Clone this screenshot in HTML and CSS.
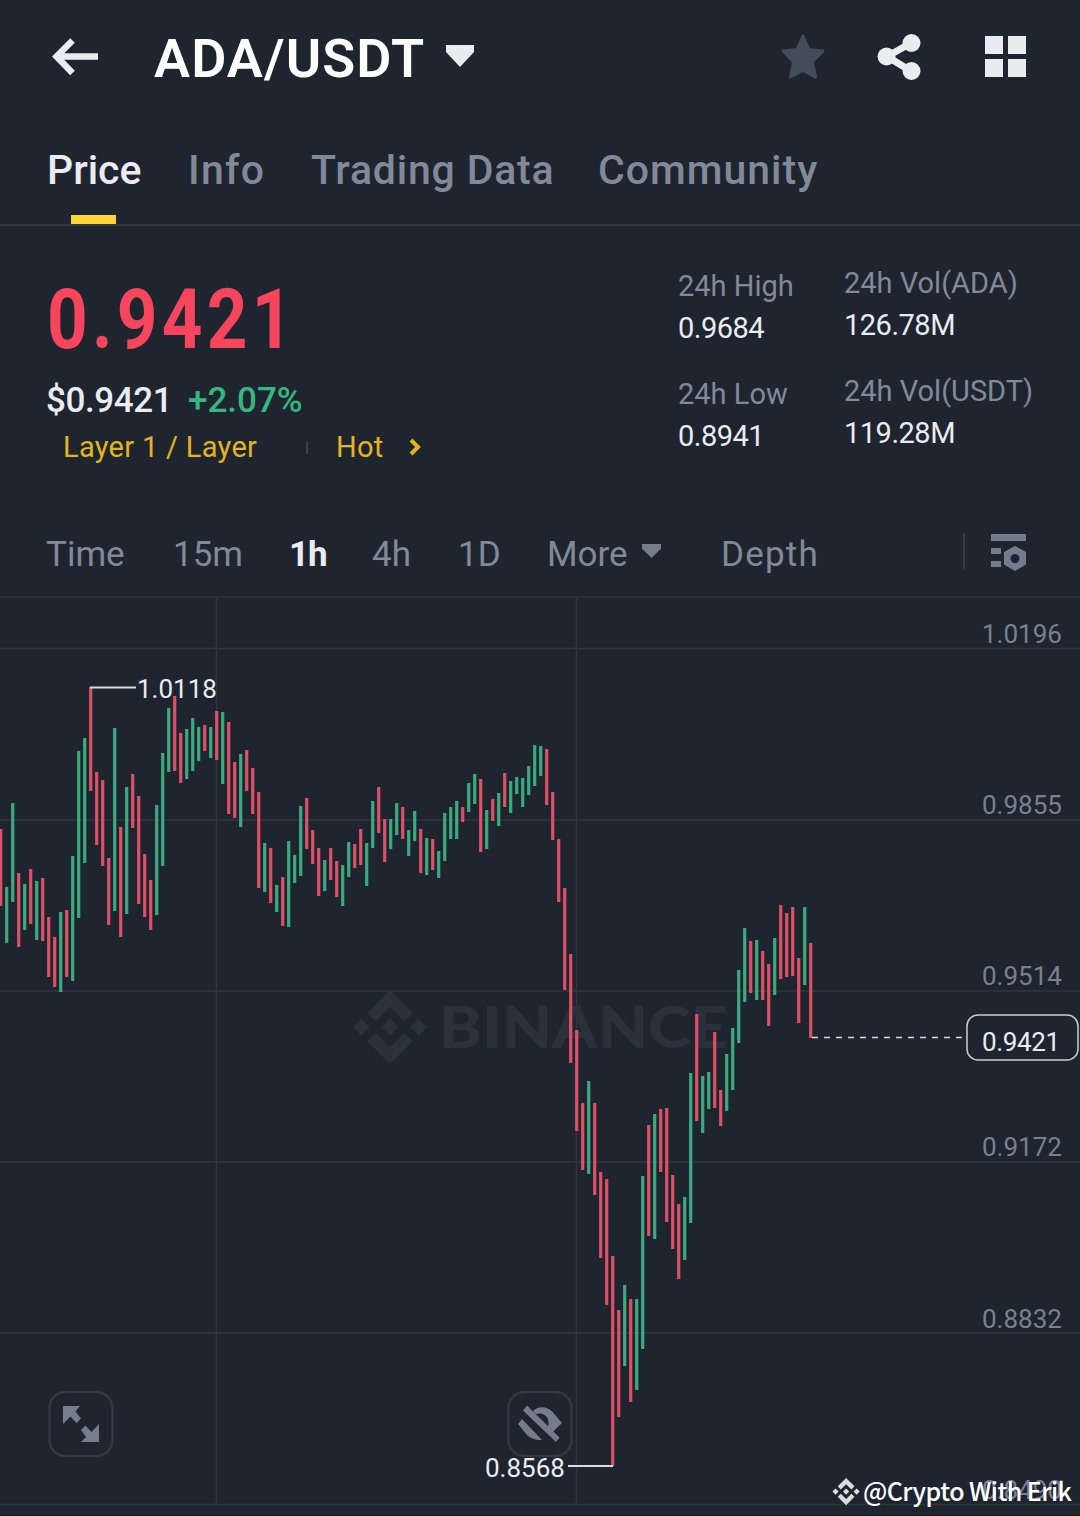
FILE: index.html
```html
<!DOCTYPE html>
<html lang="en">
    <head>
        <meta charset="UTF-8">
        <meta name="viewport" content="width=device-width, initial-scale=1.0">
        <title>ADA/USDT</title>
        <link rel="stylesheet" href="styles.css">
    </head>
    <body>
        <header class="header">
            <svg class="back" width="46" height="38" viewBox="0 0 46 38"><path d="M46 18.500H6M20.500 2.500L4.500 18.500L20.500 35"/></svg>
            <h1>ADA/USDT</h1>
            <svg class="caret" width="28" height="23" viewBox="0 0 28 23"><path d="M0 0h28v7L14 22 0 7z"/></svg>
            <div class="actions">
                <svg width="46" height="48" viewBox="0 0 46 48"><path class="star" d="M23 3l6 13.500 14 1.500-10.500 10.500 3 15.500L23 37.500 10.500 44l3-15.500L3 18l14-1.500z"/></svg>
                <svg width="44" height="46" viewBox="0 0 44 46"><path class="share-line" d="M34 9L10 22.500 34 37"/><g class="light"><circle cx="34.500" cy="9" r="9"/><circle cx="9.500" cy="22.500" r="9"/><circle cx="34.500" cy="37" r="9"/></g></svg>
                <svg width="41" height="41" viewBox="0 0 41 41"><path class="light" d="M0 0h18v18H0zM23 0h18v18H23zM0 23h18v18H0zM23 23h18v18H23z"/></svg>
            </div>
        </header>

        <nav class="tabs">
            <a class="active">Price</a>
            <a class="info">Info</a>
            <a class="trading">Trading Data</a>
            <a class="community">Community</a>
        </nav>

        <section class="summary">
            <div class="quote">
                <div class="price">0.9421</div>
                <div class="change"><span class="usd">$0.9421</span><span class="up">+2.07%</span></div>
                <div class="tags">
                    <span class="layer">Layer 1 / Layer</span>
                    <i class="tag-sep"></i>
                    <span class="hot">Hot</span>
                    <svg width="12" height="18" viewBox="0 0 12 18"><path d="M2 2l7 7-7 7"/></svg>
                </div>
            </div>
            <div class="stats">
                <div class="stat"><label class="high">24h High</label><b>0.9684</b></div>
                <div class="stat"><label class="low">24h Low</label><b>0.8941</b></div>
            </div>
            <div class="stats volume">
                <div class="stat"><label class="vol-ada">24h Vol(ADA)</label><b>126.78M</b></div>
                <div class="stat"><label class="vol-usdt">24h Vol(USDT)</label><b>119.28M</b></div>
            </div>
        </section>

        <nav class="intervals">
            <span class="time">Time</span>
            <span class="m15">15m</span>
            <span class="h1 active">1h</span>
            <span class="h4">4h</span>
            <span class="d1">1D</span>
            <span class="more">More</span>
            <svg class="more-caret" width="19" height="14" viewBox="0 0 19 14"><path d="M0 0h19v4.500L9.500 14 0 4.500z"/></svg>
            <span class="depth">Depth</span>
            <i class="divider"></i>
            <svg class="settings" width="36" height="37" viewBox="0 0 36 37">
                <path fill-rule="evenodd" d="M0 0h35v7H0zM0 14h10v6H0zM0 27h10v6H0zM24 12l11 6v12.500L24 37l-11-6.500V18zM24 20a4.500 4.500 0 1 0 .01 0z"/>
            </svg>
        </nav>

        <svg class="chart" width="1080" height="918" viewBox="0 598 1080 918">
            <defs>
                <g id="logo">
                    <path d="M38.7 53.200L63.300 28.600 87.900 53.200 102.200 38.900 63.300 0 24.400 38.900zM38.700 73.400L63.300 98 87.900 73.400 102.200 87.700 63.300 126.600 24.400 87.700zM0 63.300L14.300 49 28.600 63.300 14.300 77.600zM98 63.300L112.300 49 126.600 63.300 112.300 77.600zM48.800 63.300L63.300 48.800 77.800 63.300 63.300 77.800z"/>
                </g>
            </defs>
            <path class="grid" d="M0 648.500H1080M0 820H1080M0 991H1080M0 1162H1080M0 1333H1080M0 1504.500H1080M216.500 598V1504M576.500 598V1504"/>
            <path class="bottom-edge" d="M0 1515.500H1080"/>

            <g class="watermark">
                <use href="#logo" transform="translate(353 990) scale(.585)"/>
                <text x="439" y="1048" textLength="289" lengthAdjust="spacingAndGlyphs">BINANCE</text>
            </g>

            <g class="scale">
                <text x="982" y="643">1.0196</text>
                <text x="982" y="814">0.9855</text>
                <text x="982" y="985">0.9514</text>
                <text x="982" y="1156">0.9172</text>
                <text x="982" y="1328">0.8832</text>
                <text x="982" y="1499">0.8490</text>
            </g>

            <g class="chart-button">
                <rect x="49.500" y="1392" width="63" height="64" rx="16"/>
                <path d="M63 1406H80L75.500 1411.500 81 1418.500 76.500 1423 70.500 1416.500 63 1424zM99 1442H81L86 1437 81 1430 85.500 1425.500 91.500 1432 99 1424z"/>
                <rect x="508.500" y="1392" width="63" height="64" rx="16"/>
                <path d="M522 1419L518 1424 527 1435Q533 1440.500 542 1440zM527 1405.500L559.500 1437.500 556 1442 523 1410.500zM533 1411C540 1405 548 1407 553 1412.500L562 1423 550.500 1434 546.500 1430C552 1421 546 1411 536 1414z"/>
            </g>

            <g id="bars"></g>

            <path class="marker" d="M90 687.500H136M568 1466H613"/>
            <path class="last-line" d="M812 1037.500H964"/>
            <rect class="last-box" x="967" y="1015" width="111" height="45" rx="11"/>
            <g class="value">
                <text x="137" y="698">1.0118</text>
                <text x="485" y="1477">0.8568</text>
                <text x="982" y="1051" textLength="78">0.9421</text>
            </g>

            <g class="author">
                <use href="#logo" transform="translate(832.500 1478) scale(.215)"/>
                <text x="863" y="1501" textLength="209">@Crypto With Erik</text>
            </g>
        </svg>

        <script>
        // top, bottom of every hourly bar; r = down, g = up
        const bars = `r829-906 g887-943 g803-902 r873-947 g884-930 r869-924 g881-940 r878-941 r917-977 r937-987
            g912-992 r910-977 g856-981 g751-918 g738-863 r687-791 r772-845 r780-866 r858-925 g728-911
            r827-937 g787-914 r774-828 r796-904 r854-917 r880-930 g805-915 g753-866 g708-772 r696-771
            r733-783 g729-779 g718-771 g727-761 r725-751 g727-758 r711-760 g712-784 r722-814 r762-818
            g754-827 r750-791 r768-814 r792-888 g843-892 r848-903 g885-912 r877-926 g841-927 g855-883
            g806-876 r798-849 r830-864 r848-896 g860-891 r848-880 r861-897 g865-906 g842-877 r844-868
            r829-865 g843-886 g801-848 r787-833 r819-862 g819-849 g803-835 r807-839 g830-856 g811-841
            r829-873 g838-875 r839-870 g851-878 g813-861 g807-839 g801-839 r807-822 g783-812 g774-804
            r779-852 g810-849 r799-821 g793-826 r773-807 g781-813 g777-794 g778-807 g766-795 g745-786
            g746-776 r749-805 r792-840 r839-902 r888-990 r954-1063 r1030-1131 r1103-1170 g1081-1174 r1103-1195
            r1172-1258 r1179-1305 r1256-1466 r1310-1417 g1285-1366 r1299-1402 g1299-1390 g1176-1349 r1125-1236 g1114-1239
            r1109-1172 r1108-1222 r1175-1249 r1204-1279 g1197-1260 g1073-1223 r1014-1121 g1076-1133 g1072-1109 r1032-1108
            r1090-1126 g1054-1111 g1028-1090 g970-1043 g928-1002 r941-993 g940-1000 r951-1000 r964-1026 g938-995
            r905-979 r913-977 r907-976 r958-1023 g907-985 r943-1038`.split(/\s+/);

        const group = document.getElementById("bars");
        bars.forEach((bar, i) => {
            const [top, bottom] = bar.slice(1).split("-").map(Number);
            const rect = document.createElementNS("http://www.w3.org/2000/svg", "rect");
            rect.setAttribute("class", bar[0] === "r" ? "bar-down" : "bar-up");
            rect.setAttribute("x", i * 6 - 0.9);
            rect.setAttribute("y", top);
            rect.setAttribute("width", 3.2);
            rect.setAttribute("height", bottom - top);
            group.appendChild(rect);
        });
        </script>
    </body>
</html>
```

FILE: styles.css
```css
:root {
    --bg: #1f252f;
    --line: #303640;
    --text: #eaecf0;
    --muted: #828998;
    --icon: #757c8c;
    --red: #f6465d;
    --green: #36b780;
    --yellow: #e2b51f;
}

* {
    box-sizing: border-box;
}

body {
    margin: 0;
    width: 1080px;
    height: 1516px;
    overflow: hidden;
    background: var(--bg);
    color: var(--text);
    font-family: Roboto, "Liberation Sans", sans-serif;
    white-space: nowrap;
}

svg {
    display: block;
    flex: none;
}

.header {
    display: flex;
    align-items: center;
    height: 113px;
    padding: 0 54px 0 52px;
}

.back {
    fill: none;
    stroke: var(--text);
    stroke-width: 6.5;
}

h1 {
    width: 292px;
    margin: 3px 0 0 56px;
    color: #fff;
    font-size: 54px;
    font-weight: 600;
    letter-spacing: 1.1px;
}

.caret,
.light {
    fill: var(--text);
}

.actions {
    display: flex;
    align-items: center;
    margin-left: auto;
}

.actions svg:nth-child(2) {
    margin: 0 64px 0 51px;
}

.star {
    fill: #434c5a;
    stroke: #434c5a;
    stroke-width: 3;
    stroke-linejoin: round;
}

.share-line {
    fill: none;
    stroke: var(--text);
    stroke-width: 7;
}

.tabs {
    display: flex;
    height: 113px;
    padding-left: 47px;
    border-bottom: 2px solid var(--line);
    color: var(--muted);
    font-size: 41px;
    font-weight: 500;
    line-height: 115px;
}

.tabs .active {
    position: relative;
    width: 141px;
    color: var(--text);
}

.tabs .active::after {
    content: "";
    position: absolute;
    left: 24px;
    bottom: 0;
    width: 45px;
    height: 9px;
    background: #fcd535;
}

.info {
    width: 123px;
    letter-spacing: 1.3px;
}

.trading {
    width: 287px;
    letter-spacing: 0.8px;
}

.community {
    letter-spacing: 1px;
}

.summary {
    display: flex;
    height: 284px;
    padding-left: 47px;
}

.quote {
    width: 631px;
    padding-top: 44px;
}

.price {
    width: 270px;
    height: 100px;
    color: var(--red);
    font-size: 83px;
    font-weight: 700;
    letter-spacing: 5px;
    line-height: 100px;
    transform: scaleX(0.855);
    transform-origin: left;
}

.change {
    display: flex;
    font-size: 35px;
    font-weight: 500;
    line-height: 62px;
    height: 60px;
}

.usd {
    width: 142px;
    margin-left: -1px;
    letter-spacing: -0.4px;
}

.up {
    color: var(--green);
}

.tags {
    display: flex;
    align-items: center;
    height: 34px;
    padding-left: 16px;
    color: var(--yellow);
    font-size: 29px;
}

.layer {
    width: 243px;
    letter-spacing: 0.3px;
}

.tag-sep {
    width: 2px;
    height: 13px;
    margin-right: 28px;
    background: #3a414d;
}

.hot {
    width: 73px;
    letter-spacing: 0.3px;
}

.tags path {
    fill: none;
    stroke: var(--yellow);
    stroke-width: 4;
}

.stats {
    width: 166px;
    padding-top: 39px;
}

.stats.volume {
    padding-top: 36px;
}

.stat {
    height: 108px;
    font-size: 29px;
    line-height: 42px;
}

.stat label {
    display: block;
    color: var(--muted);
}

.stat b {
    display: block;
    font-weight: 400;
    letter-spacing: -0.5px;
}

.intervals {
    display: flex;
    align-items: center;
    height: 88px;
    padding-left: 46px;
    border-bottom: 2px solid #292f3a;
    color: var(--muted);
    font-size: 35px;
}

.intervals span {
    padding-top: 3px;
}

.intervals .active {
    color: var(--text);
    font-weight: 700;
    letter-spacing: -1px;
}

.time {
    width: 127px;
}

.m15 {
    width: 116px;
}

.h1 {
    width: 83px;
}

.h4 {
    width: 86px;
}

.d1 {
    width: 89px;
}

.more {
    width: 95px;
}

.more-caret {
    margin-right: 60px;
    margin-top: -4px;
    fill: var(--icon);
}

.depth {
    width: 242px;
    letter-spacing: 1.2px;
}

.divider {
    width: 2px;
    height: 36px;
    margin: -4px 26px 0 0;
    background: #343b46;
}

.settings {
    margin-top: -2px;
    fill: var(--icon);
}

.chart text {
    font-size: 26px;
}

.grid {
    fill: none;
    stroke: var(--line);
    stroke-width: 1.5;
}

.bottom-edge {
    stroke: #14171f;
}

.watermark {
    fill: #2b303b;
}

.chart .watermark text {
    font-family: Lato, sans-serif;
    font-size: 57px;
    font-weight: 900;
}

.scale {
    fill: #79808e;
}

.chart-button {
    fill: var(--icon);
}

.chart-button rect {
    fill: var(--bg);
    stroke: #323944;
    stroke-width: 2.5;
}

.bar-up {
    fill: #3caa7f;
}

.bar-down {
    fill: #dc5068;
}

.marker,
.last-line {
    fill: none;
    stroke: #d8dbe0;
    stroke-width: 2;
}

.last-line {
    stroke-width: 1.5;
    stroke-dasharray: 6 6;
}

.last-box {
    fill: var(--bg);
    stroke: #c9cdd3;
    stroke-width: 1.5;
}

.value {
    fill: var(--text);
}

.author {
    fill: #dcdcdc;
}

.chart .author text {
    fill: #fff;
    font-family: "Noto Sans CJK SC", sans-serif;
    font-size: 25px;
    font-weight: 500;
}
```
